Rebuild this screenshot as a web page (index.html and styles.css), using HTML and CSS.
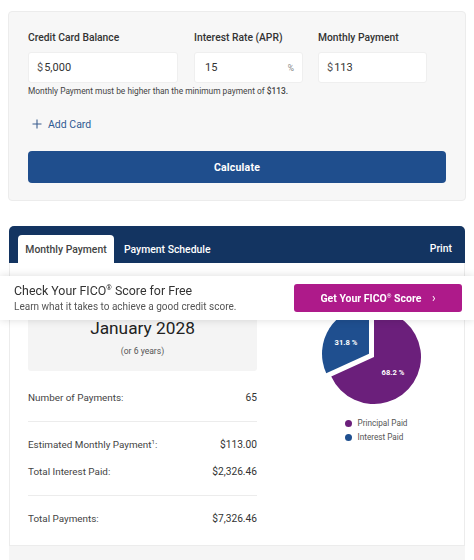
FILE: index.html
```html
<!DOCTYPE html>
<html lang="en">
<head>
<meta charset="utf-8">
<title>Credit Card Payoff Calculator</title>
<link rel="stylesheet" href="styles.css">
</head>
<body>
<section class="calc">
  <div class="fields">
    <div class="field f-balance">
      <label class="label">Credit Card Balance</label>
      <div class="input"><span class="pre">$</span><span class="val">5,000</span></div>
    </div>
    <div class="field f-rate">
      <label class="label">Interest Rate (APR)</label>
      <div class="input"><span class="val">15</span><span class="suf">%</span></div>
    </div>
    <div class="field f-pay">
      <label class="label">Monthly Payment</label>
      <div class="input"><span class="pre">$</span><span class="val">113</span></div>
    </div>
  </div>
  <p class="helper">Monthly Payment must be higher than the minimum payment of <b>$113.</b></p>
  <div class="add">
    <svg class="plus" width="10" height="10" viewBox="0 0 10 10"><path d="M5 0.5V9.5M0.5 5H9.5" stroke="#3c5f8f" stroke-width="1.1" fill="none"/></svg>
    <span>Add Card</span>
  </div>
  <button class="btn-calc">Calculate</button>
</section>

<section class="results">
  <div class="res-head">
    <div class="tab active">Monthly Payment</div>
    <div class="tab">Payment Schedule</div>
    <div class="print">Print</div>
  </div>
  <div class="res-body">
    <div class="left">
      <div class="datebox">
        <div class="date">January 2028</div>
        <div class="years">(or 6 years)</div>
      </div>
      <div class="group">
        <div class="row"><span>Number of Payments:</span><span class="v">65</span></div>
      </div>
      <div class="group g2">
        <div class="row"><span>Estimated Monthly Payment<sup>1</sup>:</span><span class="v">$113.00</span></div>
        <div class="row"><span>Total Interest Paid:</span><span class="v">$2,326.46</span></div>
      </div>
      <div class="group last">
        <div class="row"><span>Total Payments:</span><span class="v">$7,326.46</span></div>
      </div>
    </div>
    <div class="right">
      <svg class="pie" width="110" height="110" viewBox="0 0 110 110">
        <path d="M55 55 L55 8 A47 47 0 1 1 12.23 74.47 Z" fill="#6b1f7b"/>
        <path d="M55 55 L12.23 74.47 A47 47 0 0 1 55 8 Z" fill="#1f4f8f" transform="translate(-5 -3.3)"/>
        <text x="27" y="43" class="pl">31.8 %</text>
        <text x="74" y="73" class="pl">68.2 %</text>
      </svg>
      <div class="legend">
        <div class="li"><span class="dot d-p"></span>Principal Paid</div>
        <div class="li"><span class="dot d-i"></span>Interest Paid</div>
      </div>
    </div>
  </div>
</section>
<div class="after"></div>

<div class="banner">
  <div class="b-text">
    <div class="b-title">Check Your FICO<sup>®</sup> Score for Free</div>
    <div class="b-sub">Learn what it takes to achieve a good credit score.</div>
  </div>
  <button class="b-btn">Get Your FICO<sup>®</sup> Score <span class="chev">›</span></button>
</div>
</body>
</html>
```

FILE: styles.css
```css
html, body { margin: 0; padding: 0; }
body {
  font-family: Roboto, "Liberation Sans", Arial, sans-serif;
  color: #333;
  background: #fff;
  height: 560px;
  overflow: hidden;
}
.calc {
  margin: 11px 8px 0;
  background: #f7f7f7;
  border: 1px solid #ececec;
  border-radius: 4px;
  padding: 19px 19px 17px;
}
.fields { display: flex; gap: 16px; }
.f-balance { width: 150px; }
.f-rate { width: 109px; }
.f-pay { width: 109px; margin-left: -1px; }
.label {
  display: block;
  font-size: 10.3px;
  font-weight: 500;
  line-height: 14px;
  color: #333;
}
.input {
  margin-top: 7px;
  height: 31px;
  box-sizing: border-box;
  background: #fff;
  border: 1px solid #efefef;
  border-radius: 3px;
  display: flex;
  align-items: center;
  padding: 0 9px 0 8px;
  font-size: 11px;
  color: #333;
}
.f-rate .input { padding: 0 8px 0 10px; justify-content: space-between; }
.pre { color: #555; margin-right: 1px; }
.suf { color: #888; font-size: 8.5px; }
.helper {
  margin: 2px 0 0;
  font-size: 8.4px;
  line-height: 12px;
  color: #444;
}
.helper b { font-weight: 500; }
.add {
  margin-top: 20px;
  display: flex;
  align-items: center;
  height: 14px;
  padding-left: 4px;
  color: #2f5a93;
  font-size: 10.5px;
}
.plus { margin-right: 6px; }
.btn-calc {
  display: block;
  width: 100%;
  margin-top: 20px;
  height: 32px;
  border: 0;
  border-radius: 4px;
  background: #1f4e8d;
  color: #fff;
  font-family: inherit;
  font-size: 10.5px;
  font-weight: 700;
  letter-spacing: 0.2px;
}
.results {
  margin: 25px 9px 0;
  border: 1px solid #ececec;
  border-top: 0;
  border-radius: 5px 5px 0 0;
}
.res-head {
  background: #133461;
  border-radius: 5px 5px 0 0;
  height: 37px;
  box-sizing: border-box;
  padding: 9px 13px 0 9px;
  margin: 0 -1px;
  display: flex;
  align-items: stretch;
}
.tab {
  font-size: 10.4px;
  font-weight: 500;
  color: #fff;
  padding: 0 10px;
  display: flex;
  align-items: center;
  white-space: nowrap;
  border-radius: 4px 4px 0 0;
}
.tab.active { background: #fff; color: #444; width: 96px; padding: 0; box-sizing: border-box; justify-content: center; }
.print { margin-left: auto; font-size: 10.4px; font-weight: 500; color: #fff; display: flex; align-items: center; padding-bottom: 2px; }
.res-body {
  display: grid;
  grid-template-columns: 229px 1fr;
  column-gap: 27px;
  padding: 16px 0 0 18px;
  background: #fff;
}
.datebox {
  background: #f4f4f4;
  border-radius: 3px;
  padding: 38px 0 14px;
  text-align: center;
  margin-bottom: 4px;
}
.date { font-size: 17.3px; line-height: 22px; color: #222; }
.years { margin-top: 6px; font-size: 8.6px; line-height: 12px; color: #555; }
.group {
  padding: 16px 0;
  border-bottom: 1px solid #ececec;
  display: flex;
  flex-direction: column;
  gap: 13px;
}
.group.last { border-bottom: 0; padding-bottom: 19px; }
.row {
  display: flex;
  justify-content: space-between;
  font-size: 9.9px;
  line-height: 14px;
  color: #444;
}
.row sup { font-size: 6px; line-height: 0; vertical-align: 4px; }
.row .v { color: #333; font-size: 10.2px; }
.right { display: flex; flex-direction: column; align-items: center; padding-top: 23px; }
.pie { display: block; }
.pl { font-size: 7.6px; font-weight: 700; fill: #fff; text-anchor: middle; font-family: Roboto, "Liberation Sans", Arial, sans-serif; }
.legend { margin-top: 4px; margin-left: 4px; }
.li { display: flex; align-items: center; font-size: 8.2px; line-height: 14px; color: #555; }
.dot { width: 7px; height: 7px; border-radius: 50%; margin-right: 6px; }
.d-p { background: #6b1f7b; }
.d-i { background: #1f4f8f; }
.after { margin: 0 9px; height: 15px; background: #f5f5f5; }
.banner {
  position: fixed;
  top: 276px;
  left: 0;
  right: 0;
  height: 44px;
  background: #fff;
  box-shadow: 0 0 8px rgba(0,0,0,0.14);
  display: flex;
  align-items: center;
  justify-content: space-between;
  padding: 0 12px 0 14px;
}
.b-title { font-size: 12.4px; line-height: 17px; color: #333; }
.b-title sup { font-size: 7px; vertical-align: 5px; line-height: 0; }
.b-sub { font-size: 10px; line-height: 14px; color: #555; margin-top: 1px; }
.b-btn {
  width: 168px;
  height: 28px;
  border: 0;
  border-radius: 3px;
  background: #ae1a8a;
  color: #fff;
  font-family: inherit;
  font-size: 10.5px;
  font-weight: 700;
}
.b-btn sup { font-size: 6px; vertical-align: 4px; line-height: 0; }
.chev { font-weight: 400; margin-left: 8px; font-size: 12px; }
```
